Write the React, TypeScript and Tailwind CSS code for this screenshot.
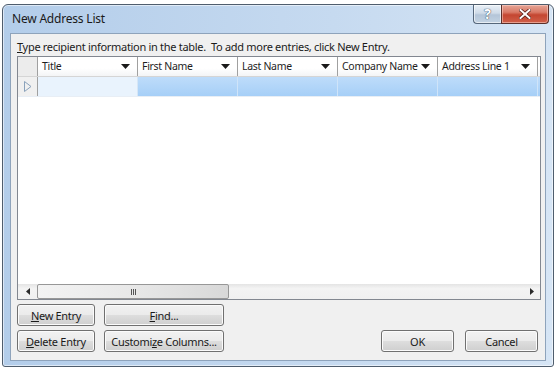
import type { ReactNode } from 'react'

const font = "font-['Segoe_UI','Noto_Sans',sans-serif]"

const columns = ['Title', 'First Name', 'Last Name', 'Company Name', 'Address Line 1']

function DropArrow() {
  return (
    <svg width="9" height="5" viewBox="0 0 9 5" className="shrink-0">
      <path d="M0 0H9L4.5 5Z" fill="#1a1a1a" />
    </svg>
  )
}

function Button({ children, className = '' }: { children: ReactNode; className?: string }) {
  return (
    <button
      className={`h-[22px] rounded-[3px] border border-[#707070] bg-[linear-gradient(to_bottom,#f2f2f2_0%,#ebebeb_48%,#dddddd_52%,#cfcfcf_100%)] shadow-[inset_0_0_0_1px_#fbfbfb] text-[11px] tracking-[-0.3px] text-[#1b1b1b] leading-none flex items-center justify-center ${className}`}
    >
      {children}
    </button>
  )
}

function CaptionButtons() {
  return (
    <div className="flex h-[19px]">
      <div className="w-[28px] h-full border border-t-0 border-r-0 border-[#56677b] rounded-bl-[4px] bg-[linear-gradient(to_bottom,#e9f0f7_0%,#cfdbe8_45%,#b4c5d8_55%,#c3d3e3_100%)] shadow-[inset_0_0_0_1px_rgba(255,255,255,0.6)] flex items-center justify-center">
        <span className="text-[14px] font-bold text-white leading-none [text-shadow:0_0_1px_#33475e,0_0_1px_#33475e]">?</span>
      </div>
      <div className="w-[48px] h-full border border-t-0 border-[#5b2f2a] rounded-br-[4px] bg-[linear-gradient(to_bottom,#e6a597_0%,#d97a67_40%,#c44631_55%,#d0604a_100%)] shadow-[inset_0_0_0_1px_rgba(255,220,210,0.5)] flex items-center justify-center">
        <svg width="12" height="10" viewBox="0 0 12 10">
          <path d="M1.5 1L10.5 9M10.5 1L1.5 9" stroke="#5a1f18" strokeWidth="3.6" strokeLinecap="square" />
          <path d="M1.5 1L10.5 9M10.5 1L1.5 9" stroke="#ffffff" strokeWidth="2" strokeLinecap="square" />
        </svg>
      </div>
    </div>
  )
}

function Grid() {
  return (
    <div className="w-[524px] h-[244px] border border-[#828790] bg-white flex flex-col">
      {/* header row */}
      <div className="flex h-[20px] border-b border-[#d5d5d5] bg-[linear-gradient(to_bottom,#ffffff_0%,#ffffff_60%,#f3f4f6_100%)]">
        <div className="w-[20px] h-full bg-[#ececec] border-r border-[#a0a0a0]" />
        {columns.map((c) => (
          <div
            key={c}
            className="w-[100px] shrink-0 h-full flex items-center justify-between pl-[4px] pr-[7px] border-r border-[#a0a0a0] text-[10.5px] tracking-[-0.3px] text-[#1e1e1e]"
          >
            <span className="leading-none whitespace-nowrap">{c}</span>
            <DropArrow />
          </div>
        ))}
        <div className="flex-1 h-full" />
      </div>
      {/* data row */}
      <div className="flex h-[20px] border-b border-[#e8eef5]">
        <div className="w-[20px] h-full bg-[#f0f0f0] border-r border-[#a0a0a0] flex items-center justify-center">
          <svg width="8" height="11" viewBox="0 0 8 11">
            <path d="M0.5 0.5L7 5.5L0.5 10.5Z" fill="none" stroke="#8aa2bb" strokeWidth="1" />
          </svg>
        </div>
        <div className="w-[100px] h-full bg-[#e9f3fd] border-r border-[#d6e6f6]" />
        {[0, 1, 2, 3].map((i) => (
          <div
            key={i}
            className="w-[100px] h-full bg-[linear-gradient(to_bottom,#bedcfa,#a6cff7)] border-r border-[#cfe4f9]"
          />
        ))}
        <div className="flex-1 h-full bg-[linear-gradient(to_bottom,#bedcfa,#a6cff7)]" />
      </div>
      <div className="flex-1" />
      {/* horizontal scrollbar */}
      <div className="h-[15px] flex items-center bg-[linear-gradient(to_bottom,#e4e4e4,#f3f3f3_30%,#f0f0f0)]">
        <div className="w-[19px] h-full flex items-center justify-center">
          <svg width="4" height="7" viewBox="0 0 4 7">
            <path d="M4 0V7L0 3.5Z" fill="#2a2a2a" />
          </svg>
        </div>
        <div className="w-[192px] h-[15px] rounded-[2px] border border-[#979797] bg-[linear-gradient(to_right,#f3f3f3,#e8e8e8_50%,#d8d8d8)] flex items-center justify-center">
          <div className="flex gap-[1px]">
            {[0, 1, 2].map((i) => (
              <div key={i} className="w-[1px] h-[6px] bg-[#555]" />
            ))}
          </div>
        </div>
        <div className="flex-1" />
        <div className="w-[17px] h-full flex items-center justify-center">
          <svg width="4" height="7" viewBox="0 0 4 7">
            <path d="M0 0V7L4 3.5Z" fill="#2a2a2a" />
          </svg>
        </div>
      </div>
    </div>
  )
}

export default function App() {
  return (
    <div className={`w-[557px] h-[370px] bg-white pt-[4px] pl-[2px] ${font}`}>
      <div className="w-[552px] h-[363px] rounded-t-[6px] rounded-b-[3px] border border-[#4f5d6d] bg-[linear-gradient(to_right,#b3cdea,#c6daf0_60%,#d6e5f5)] shadow-[inset_0_0_0_1px_rgba(255,255,255,0.55)] flex flex-col">
        <div className="h-[28px] flex items-start justify-between pl-[9px] pr-[4px]">
          <span className="pt-[8px] text-[12px] tracking-[-0.2px] text-[#1a1a1a] leading-none">New Address List</span>
          <CaptionButtons />
        </div>
        <div className="mx-[7px] h-[328px] border border-[#8ea3bb] bg-[#f0f0f0] px-[6px] flex flex-col">
          <div className="h-[22px] flex items-center text-[11px] tracking-[-0.3px] text-[#1b1b1b] leading-none pt-[3px]">
            <span>
              <span className="underline">T</span>ype recipient information in the table.&nbsp; To add more entries, click New Entry.
            </span>
          </div>
          <Grid />
          <div className="flex mt-[4px] gap-[9px]">
            <div className="flex flex-col gap-[4px]">
              <Button className="w-[78px]">
                <span>
                  <span className="underline">N</span>ew Entry
                </span>
              </Button>
              <Button className="w-[78px]">
                <span>
                  <span className="underline">D</span>elete Entry
                </span>
              </Button>
            </div>
            <div className="flex flex-col gap-[4px]">
              <Button className="w-[120px]">
                <span>
                  <span className="underline">F</span>ind...
                </span>
              </Button>
              <Button className="w-[120px]">
                <span>
                  Customi<span className="underline">z</span>e Columns...
                </span>
              </Button>
            </div>
            <div className="flex-1 flex items-end justify-end gap-[11px] pr-[1px]">
              <Button className="w-[73px]">OK</Button>
              <Button className="w-[73px]">Cancel</Button>
            </div>
          </div>
        </div>
      </div>
    </div>
  )
}
